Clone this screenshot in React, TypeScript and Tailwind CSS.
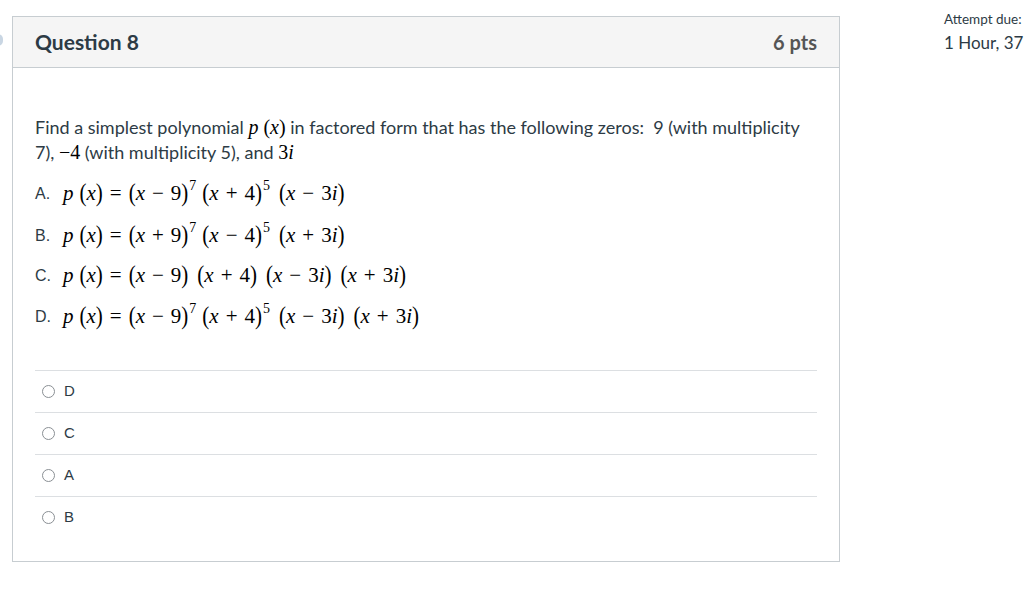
import React from "react";

const serif = { fontFamily: '"Liberation Serif", "DejaVu Serif", serif' };
const sans = { fontFamily: '"Liberation Sans", Arial, sans-serif' };

function V({ children }: { children: React.ReactNode }) {
  return <span className="italic">{children}</span>;
}

function Sup({ n }: { n: string }) {
  return <sup className="text-[14px] -top-[10px] ml-[1px]">{n}</sup>;
}

function Op({ children }: { children: React.ReactNode }) {
  return <span className="mx-[7px]">{children}</span>;
}

function P({ c }: { c: string }) {
  return <span className="inline-block scale-y-[1.15]">{c}</span>;
}

function Factor({ sign, c, exp, last }: { sign: string; c: React.ReactNode; exp?: string; last?: boolean }) {
  return (
    <span className={last ? "" : exp === "7" ? "mr-[6px]" : "mr-[9px]"}>
      <P c="(" />
      <V>x</V>
      <Op>{sign}</Op>
      {c}
      <P c=")" />
      {exp && <Sup n={exp} />}
    </span>
  );
}

function Px() {
  return (
    <span>
      <V>p</V>
      <span className="ml-[6px]">
        <P c="(" />
      </span>
      <V>x</V>
      <P c=")" />
      <Op>=</Op>
    </span>
  );
}

const three = (
  <>
    3<V>i</V>
  </>
);

const options = [
  {
    label: "A.",
    h: "h-[42px]",
    body: (
      <>
        <Px />
        <Factor sign="−" c="9" exp="7" />
        <Factor sign="+" c="4" exp="5" />
        <Factor sign="−" c={three} last />
      </>
    ),
  },
  {
    label: "B.",
    h: "h-[41px]",
    body: (
      <>
        <Px />
        <Factor sign="+" c="9" exp="7" />
        <Factor sign="−" c="4" exp="5" />
        <Factor sign="+" c={three} last />
      </>
    ),
  },
  {
    label: "C.",
    h: "h-[40px]",
    body: (
      <>
        <Px />
        <Factor sign="−" c="9" />
        <Factor sign="+" c="4" />
        <Factor sign="−" c={three} />
        <Factor sign="+" c={three} last />
      </>
    ),
  },
  {
    label: "D.",
    h: "h-[42px]",
    body: (
      <>
        <Px />
        <Factor sign="−" c="9" exp="7" />
        <Factor sign="+" c="4" exp="5" />
        <Factor sign="−" c={three} />
        <Factor sign="+" c={three} last />
      </>
    ),
  },
];

const answers = ["D", "C", "A", "B"];

export default function App() {
  return (
    <div className="w-[1024px] h-[589px] bg-white overflow-hidden flex" style={{ fontFamily: "Lato, sans-serif" }}>
      <div className="w-[12px] shrink-0 pt-[34px]">
        <div className="w-[10px] h-[12px] -ml-[7px] rounded-full bg-[#c9d6e3]" />
      </div>

      <div className="w-[828px] shrink-0 mt-[16px] h-[546px] border border-[#c7cdd1] bg-white">
        <div className="h-[51px] bg-[#f5f5f5] border-b border-[#c7cdd1] flex items-center justify-between pl-[22px] pr-[22px]">
          <h2 className="text-[21px] font-bold text-[#2d3b45]">Question 8</h2>
          <span className="text-[20px] font-bold text-[#555]">6 pts</span>
        </div>

        <div className="px-[22px] pt-[47px]">
          <p className="text-[18px] leading-[25px] text-[#2d3b45] pr-[10px]">
            <span>Find a simplest polynomial </span>
            <span style={serif} className="text-[20px] leading-none text-black">
              <V>p</V> (<V>x</V>)
            </span>
            <span> in factored form that has the following zeros:&nbsp; 9 (with multiplicity</span>{" "}
            <span>7), </span>
            <span style={serif} className="text-[20px] leading-none text-black">−4</span>
            <span> (with multiplicity 5), and </span>
            <span style={serif} className="text-[20px] leading-none text-black">{three}</span>
          </p>

          <div className="mt-[8px]">
            {options.map((o) => (
              <div key={o.label} className={`${o.h} flex items-center`}>
                <span className="text-[16px] text-[#2d3b45] w-[28px]" style={sans}>
                  {o.label}
                </span>
                <span style={serif} className="text-[21px] text-black whitespace-nowrap">
                  {o.body}
                </span>
              </div>
            ))}
          </div>

          <div className="mt-[32px]">
            {answers.map((a) => (
              <div key={a} className="h-[42px] border-t border-[#dcdfe2] flex items-center">
                <span className="w-[13px] h-[13px] rounded-full border border-[#8a8f94] ml-[7px] mr-[9px] shrink-0" />
                <span className="text-[15px] text-[#2d3b45]" style={sans}>
                  {a}
                </span>
              </div>
            ))}
          </div>
        </div>
      </div>

      <div className="flex-1 pl-[104px] pt-[10px] whitespace-nowrap text-[#2d3b45]">
        <div className="text-[13.5px] leading-[18px]">Attempt due:</div>
        <div className="text-[17px] leading-[22px] mt-[4px]">1 Hour, 37</div>
      </div>
    </div>
  );
}
